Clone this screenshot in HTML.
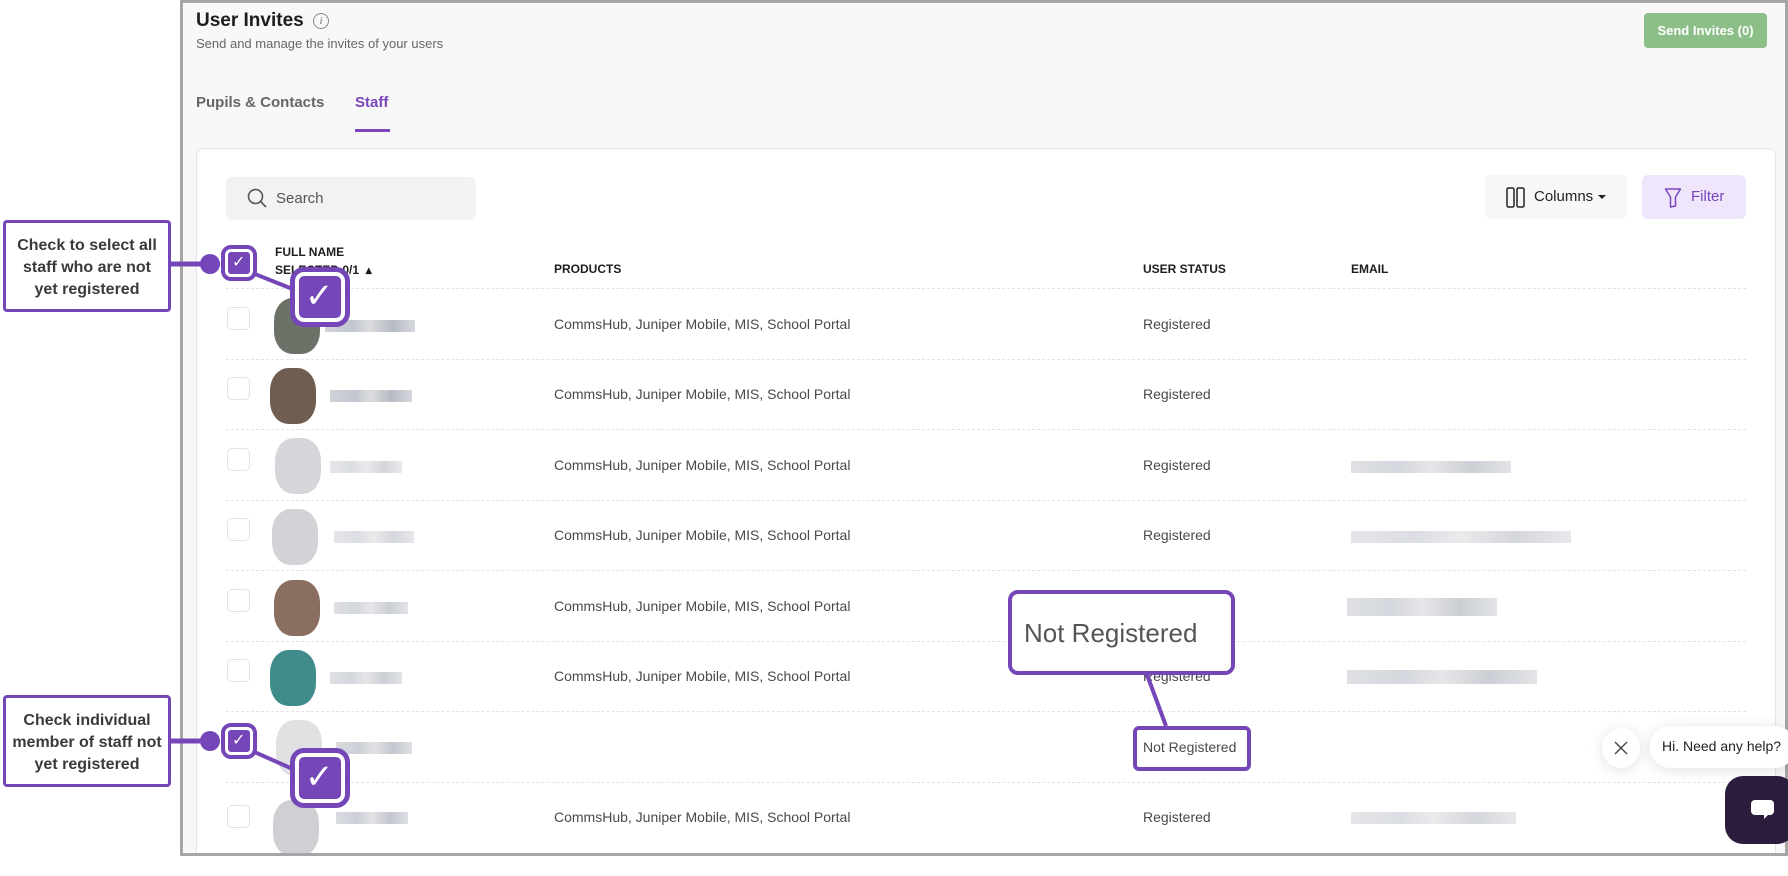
<!DOCTYPE html>
<html><head><meta charset="utf-8"><style>
*{box-sizing:border-box;margin:0;padding:0}
body{width:1788px;height:856px;background:#fff;font-family:"Liberation Sans",sans-serif;position:relative;overflow:hidden;color:#222}
.a{position:absolute}
.framebg{left:180px;top:0;width:1608px;height:856px;background:#f8f8f8}
.frame{left:180px;top:0;width:1608px;height:856px;border:3px solid #a6a6a6;z-index:5;pointer-events:none}
.card{left:196px;top:148px;width:1580px;height:720px;background:#fff;border:1px solid #e4e4e7;border-radius:8px}
.row{color:#4a4a4a;font-size:14px}
.line{height:0;border-top:1px dashed #e3e3e3;left:226px;width:1520px}
.cb{width:23px;height:23px;border:1px solid #e2e2e2;border-radius:5px;background:#fff}
.blur{height:12px;background:linear-gradient(90deg,#c9ccd3,#b7bcc6 30%,#d5d6da 50%,#a9aeb8 75%,#cfd2d8);opacity:.85}
.av{width:46px;height:56px;border-radius:40%;}
.call{border:3px solid #7446b7;background:#fff;border-radius:4px;font-size:16px;color:#3a3a3a;text-align:center;line-height:22px;font-weight:bold}
.pcb{background:#7446b7;border:4px solid #fff;outline:5px solid #7446b7;border-radius:8px}
</style></head><body>
<div class="a framebg"></div>
<div class="a frame"></div>
<div class="a" style="left:196px;top:10px;font-size:19px;font-weight:bold;color:#1d1d1d">User Invites</div>
<div class="a" style="left:313px;top:13px;width:16px;height:16px;border:1.3px solid #888;border-radius:50%;font-size:11px;color:#777;text-align:center;line-height:14px;font-style:italic;font-family:'Liberation Serif',serif">i</div>
<div class="a" style="left:196px;top:36px;font-size:13px;color:#666">Send and manage the invites of your users</div>
<div class="a" style="left:1644px;top:13px;width:123px;height:35px;background:#8cbf88;border-radius:4px;color:#fff;font-size:13px;font-weight:bold;text-align:center;line-height:35px">Send Invites (0)</div>
<div class="a" style="left:196px;top:94px;font-size:15px;font-weight:bold;color:#666">Pupils &amp; Contacts</div>
<div class="a" style="left:355px;top:94px;font-size:15px;font-weight:bold;color:#7a45bd">Staff</div>
<div class="a" style="left:355px;top:129px;width:35px;height:3px;background:#7a45bd"></div>
<div class="a card"></div>
<div class="a" style="left:226px;top:177px;width:250px;height:43px;background:#f1f2f4;border-radius:6px"></div>
<svg class="a" style="left:246px;top:187px" width="22" height="22" viewBox="0 0 22 22"><circle cx="9.5" cy="9.5" r="7" fill="none" stroke="#555" stroke-width="1.6"/><path d="M14.5 14.5L20 20" stroke="#555" stroke-width="1.6"/></svg>
<div class="a" style="left:276px;top:190px;font-size:15px;color:#555">Search</div>
<div class="a" style="left:1485px;top:175px;width:142px;height:44px;background:#f7f7f7;border-radius:6px"></div>
<svg class="a" style="left:1506px;top:187px" width="20" height="21"><rect x="1" y="1" width="7" height="19" rx="1.5" fill="none" stroke="#222" stroke-width="1.5"/><rect x="11" y="1" width="7" height="19" rx="1.5" fill="none" stroke="#222" stroke-width="1.5"/></svg>
<div class="a" style="left:1534px;top:188px;font-size:15px;color:#222">Columns</div>
<div class="a" style="left:1598px;top:195px;border-left:4px solid transparent;border-right:4px solid transparent;border-top:4px solid #222"></div>
<div class="a" style="left:1642px;top:175px;width:104px;height:44px;background:#efe6fc;border-radius:6px"></div>
<svg class="a" style="left:1664px;top:187px" width="18" height="22" viewBox="0 0 18 22"><path d="M1.5 2h15l-5 8v9l-5 1v-10z" fill="none" stroke="#7a45bd" stroke-width="1.5" stroke-linejoin="round"/></svg>
<div class="a" style="left:1691px;top:188px;font-size:15px;color:#7a45bd">Filter</div>
<div class="a" style="left:275px;top:243px;font-size:12px;font-weight:bold;color:#1d1d1d;line-height:18px">FULL NAME<br>SELECTED 0/1 &nbsp;▴</div>
<div class="a" style="left:554px;top:262px;font-size:12px;font-weight:bold;color:#1d1d1d">PRODUCTS</div>
<div class="a" style="left:1143px;top:262px;font-size:12px;font-weight:bold;color:#1d1d1d">USER STATUS</div>
<div class="a" style="left:1351px;top:262px;font-size:12px;font-weight:bold;color:#1d1d1d">EMAIL</div>
<div class="a line" style="top:288px"></div>
<div class="a line" style="top:359px"></div>
<div class="a line" style="top:429px"></div>
<div class="a line" style="top:500px"></div>
<div class="a line" style="top:570px"></div>
<div class="a line" style="top:641px"></div>
<div class="a line" style="top:711px"></div>
<div class="a line" style="top:782px"></div>

<div class="a cb" style="left:227px;top:307px"></div>
<div class="a av" style="left:274px;top:298px;background:#6d7268"></div>
<div class="a blur" style="left:325px;top:320px;width:90px"></div>
<div class="a row" style="left:554px;top:316px">CommsHub, Juniper Mobile, MIS, School Portal</div>
<div class="a row" style="left:1143px;top:316px">Registered</div>

<div class="a cb" style="left:227px;top:377px"></div>
<div class="a av" style="left:270px;top:368px;background:#6e5d50"></div>
<div class="a blur" style="left:330px;top:390px;width:82px"></div>
<div class="a row" style="left:554px;top:386px">CommsHub, Juniper Mobile, MIS, School Portal</div>
<div class="a row" style="left:1143px;top:386px">Registered</div>

<div class="a cb" style="left:227px;top:448px"></div>
<div class="a av" style="left:275px;top:438px;background:#d6d6da"></div>
<div class="a blur" style="left:330px;top:461px;width:72px;opacity:.5"></div>
<div class="a row" style="left:554px;top:457px">CommsHub, Juniper Mobile, MIS, School Portal</div>
<div class="a row" style="left:1143px;top:457px">Registered</div>
<div class="a blur" style="left:1351px;top:461px;width:160px;opacity:.6"></div>

<div class="a cb" style="left:227px;top:518px"></div>
<div class="a av" style="left:272px;top:509px;background:#d2d3d6"></div>
<div class="a blur" style="left:334px;top:531px;width:80px;opacity:.5"></div>
<div class="a row" style="left:554px;top:527px">CommsHub, Juniper Mobile, MIS, School Portal</div>
<div class="a row" style="left:1143px;top:527px">Registered</div>
<div class="a blur" style="left:1351px;top:531px;width:220px;opacity:.5"></div>

<div class="a cb" style="left:227px;top:589px"></div>
<div class="a av" style="left:274px;top:580px;background:#8a6e60"></div>
<div class="a blur" style="left:334px;top:602px;width:74px;opacity:.6"></div>
<div class="a row" style="left:554px;top:598px">CommsHub, Juniper Mobile, MIS, School Portal</div>
<div class="a blur" style="left:1347px;top:598px;width:150px;height:18px;opacity:.6"></div>

<div class="a cb" style="left:227px;top:659px"></div>
<div class="a av" style="left:270px;top:650px;background:#3f8c8a"></div>
<div class="a blur" style="left:330px;top:672px;width:72px;opacity:.6"></div>
<div class="a row" style="left:554px;top:668px">CommsHub, Juniper Mobile, MIS, School Portal</div>
<div class="a row" style="left:1143px;top:668px">Registered</div>
<div class="a blur" style="left:1347px;top:670px;width:190px;height:14px;opacity:.6"></div>

<div class="a av" style="left:276px;top:720px;background:#e1e1e4"></div>
<div class="a blur" style="left:336px;top:742px;width:76px;opacity:.7"></div>
<div class="a row" style="left:1143px;top:739px">Not Registered</div>

<div class="a cb" style="left:227px;top:805px"></div>
<div class="a av" style="left:273px;top:800px;background:#d0d0d4"></div>
<div class="a blur" style="left:336px;top:812px;width:72px;opacity:.7"></div>
<div class="a row" style="left:554px;top:809px">CommsHub, Juniper Mobile, MIS, School Portal</div>
<div class="a row" style="left:1143px;top:809px">Registered</div>
<div class="a blur" style="left:1351px;top:812px;width:165px;opacity:.5"></div>

<div class="a" style="left:183px;top:853px;width:1602px;height:3px;background:#a6a6a6;z-index:6"></div>
<div class="a" style="left:0;top:856px;width:1788px;height:20px;background:#fff;z-index:6"></div>

<svg class="a" style="left:0;top:0;z-index:7" width="1788" height="856">
<line x1="168" y1="264" x2="212" y2="264" stroke="#7446b7" stroke-width="5"/>
<circle cx="210" cy="264" r="10" fill="#7446b7"/>
<line x1="250" y1="272" x2="295" y2="290" stroke="#7446b7" stroke-width="4"/>
<line x1="168" y1="741" x2="212" y2="741" stroke="#7446b7" stroke-width="5"/>
<circle cx="210" cy="741" r="10" fill="#7446b7"/>
<line x1="250" y1="750" x2="295" y2="770" stroke="#7446b7" stroke-width="4"/>
<line x1="1146" y1="672" x2="1166" y2="726" stroke="#7446b7" stroke-width="4"/>
</svg>
<div class="a call" style="left:3px;top:220px;width:168px;height:92px;padding-top:12px">Check to select all<br>staff who are not<br>yet registered</div>
<div class="a call" style="left:3px;top:695px;width:168px;height:92px;padding-top:12px">Check individual<br>member of staff not<br>yet registered</div>

<div class="a pcb" style="left:225px;top:249px;width:28px;height:28px;outline-width:4px;border-width:3px;border-radius:6px;z-index:8"></div>
<div class="a" style="left:232px;top:252px;color:#fff;font-size:16px;z-index:8">✓</div>
<div class="a pcb" style="left:295px;top:272px;width:50px;height:50px;border-radius:9px;z-index:8"></div>
<div class="a" style="left:305px;top:276px;color:#fff;font-size:34px;z-index:8">✓</div>

<div class="a pcb" style="left:225px;top:727px;width:28px;height:28px;outline-width:4px;border-width:3px;border-radius:6px;z-index:8"></div>
<div class="a" style="left:232px;top:730px;color:#fff;font-size:16px;z-index:8">✓</div>
<div class="a pcb" style="left:295px;top:753px;width:50px;height:50px;border-radius:9px;z-index:8"></div>
<div class="a" style="left:305px;top:757px;color:#fff;font-size:34px;z-index:8">✓</div>

<div class="a" style="left:1008px;top:590px;width:227px;height:85px;border:4px solid #7446b7;border-radius:10px;background:#fff;font-size:26px;color:#555;padding:24px 0 0 12px;z-index:8">Not Registered</div>
<div class="a" style="left:1133px;top:726px;width:118px;height:45px;border:4px solid #7446b7;border-radius:6px;z-index:8"></div>

<div class="a" style="left:1602px;top:728px;width:38px;height:40px;border-radius:50%;background:#fff;box-shadow:0 2px 14px rgba(0,0,0,.12);z-index:8"></div>
<svg class="a" style="left:1614px;top:741px;z-index:9" width="14" height="14"><path d="M1 1L13 13M13 1L1 13" stroke="#444" stroke-width="1.4"/></svg>
<div class="a" style="left:1650px;top:726px;width:145px;height:42px;border-radius:20px;background:#fff;box-shadow:0 2px 14px rgba(0,0,0,.12);font-size:14px;color:#222;padding:12px 0 0 12px;z-index:8">Hi. Need any help?</div>
<div class="a" style="left:1725px;top:776px;width:70px;height:68px;border-radius:18px;background:#2b1d3d;z-index:8"></div>
<div class="a" style="left:1751px;top:800px;width:23px;height:15px;border-radius:4px;background:#fff;z-index:9"></div>
<div class="a" style="left:1764px;top:814px;border-left:5px solid #fff;border-bottom:5px solid transparent;z-index:9"></div>
</body></html>
